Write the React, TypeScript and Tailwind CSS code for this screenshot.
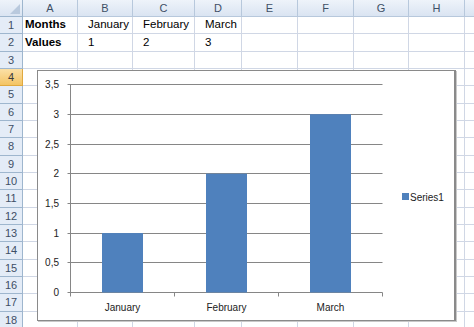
const cols = [
  { l: 'A', w: 55 },
  { l: 'B', w: 55 },
  { l: 'C', w: 62 },
  { l: 'D', w: 47 },
  { l: 'E', w: 56 },
  { l: 'F', w: 56 },
  { l: 'G', w: 55 },
  { l: 'H', w: 56 },
  { l: '', w: 40 },
];

const cells: Record<string, { text: string; bold?: boolean }> = {
  A1: { text: 'Months', bold: true },
  B1: { text: 'January' },
  C1: { text: 'February' },
  D1: { text: 'March' },
  A2: { text: 'Values', bold: true },
  B2: { text: '1' },
  C2: { text: '2' },
  D2: { text: '3' },
};

const rowHeights = Array.from({ length: 18 }, (_, i) => [17, 18, 17][i % 3]);

// y = value line positions inside the chart svg
const ticks = [
  { v: '0', y: 221.5 },
  { v: '0,5', y: 191.5 },
  { v: '1', y: 162.5 },
  { v: '1,5', y: 132.5 },
  { v: '2', y: 102.5 },
  { v: '2,5', y: 73.5 },
  { v: '3', y: 43.5 },
  { v: '3,5', y: 13.5 },
];

const bars = [
  { name: 'January', value: 1, cx: 84.5 },
  { name: 'February', value: 2, cx: 188.5 },
  { name: 'March', value: 3, cx: 292.5 },
];

function Chart() {
  const zeroY = 221.5;
  const perUnit = (221.5 - 13.5) / 3.5;
  return (
    <div className="absolute left-[37px] top-[70px] w-[419px] h-[251px] bg-white border border-[#8a8a8a] border-r-2 shadow-[1px_1px_0_#c8c8c8]">
      <svg width="417" height="249" className="block" style={{ fontFamily: '"Liberation Sans", Arial, sans-serif' }}>
        {ticks.map(t => (
          <g key={t.v}>
            <line x1="29.5" x2="344.5" y1={t.y} y2={t.y} stroke="#868686" strokeWidth="1" />
            <text x="21" y={t.y + 3.5} textAnchor="end" fontSize="10" fill="#222">{t.v}</text>
          </g>
        ))}
        <line x1="32.5" x2="32.5" y1="13.5" y2="225" stroke="#868686" strokeWidth="1" />
        {[32.5, 136.5, 240.5, 344.5].map(x => (
          <line key={x} x1={x} x2={x} y1="221.5" y2="225.5" stroke="#868686" strokeWidth="1" />
        ))}
        {bars.map(b => (
          <g key={b.name}>
            <rect x={b.cx - 20.5} y={zeroY - b.value * perUnit} width="41" height={b.value * perUnit} fill="#4f81bd" />
            <text x={b.cx} y="240" textAnchor="middle" fontSize="10" fill="#222">{b.name}</text>
          </g>
        ))}
        <rect x="364" y="122" width="7" height="7" fill="#4f81bd" />
        <text x="372" y="129.5" fontSize="10" fill="#222">Series1</text>
      </svg>
    </div>
  );
}

export default function App() {
  return (
    <div className="relative w-[474px] h-[327px] overflow-hidden bg-white" style={{ fontFamily: '"Liberation Sans", Arial, sans-serif' }}>
      <div className="flex h-[17px]">
        <div className="relative w-[23px] shrink-0 bg-gradient-to-b from-[#eef3fa] to-[#dae4f2] border-r border-b border-[#9eb6ce]">
          <svg className="absolute right-[2px] bottom-[2px]" width="10" height="10">
            <polygon points="10,0 10,10 0,10" fill="#b9c9dd" />
          </svg>
        </div>
        {cols.map((c, ci) => (
          <div key={ci} style={{ width: c.w }}
            className="shrink-0 flex items-center justify-center text-[11px] text-[#3e4f66] bg-gradient-to-b from-[#eef3fa] to-[#dae4f2] border-r border-b border-[#b7c8dc]">
            {c.l}
          </div>
        ))}
      </div>
      {rowHeights.map((h, i) => {
        const r = i + 1;
        const sel = r === 4;
        return (
          <div key={r} className="flex" style={{ height: h }}>
            <div className={`w-[23px] shrink-0 flex items-center justify-center text-[11px] border-r border-b ${
              sel ? 'bg-gradient-to-b from-[#fbe0a6] to-[#f3c463] text-[#3b3b3b] border-[#e0a93f]' : 'bg-[#e4ecf7] text-[#3e4f66] border-[#9eb6ce]'
            }`}>
              {r}
            </div>
            {cols.map((c, ci) => {
              const cell = cells[`${c.l}${r}`];
              return (
                <div key={ci} style={{ width: c.w }}
                  className={`shrink-0 flex items-center border-r border-b border-[#d0d7e5] text-[11.5px] text-black whitespace-nowrap overflow-visible ${
                    ci === 0 ? 'pl-[2px]' : 'pl-[10px]'
                  } ${cell?.bold ? 'font-bold' : ''}`}>
                  {cell?.text}
                </div>
              );
            })}
          </div>
        );
      })}
      <Chart />
    </div>
  );
}
